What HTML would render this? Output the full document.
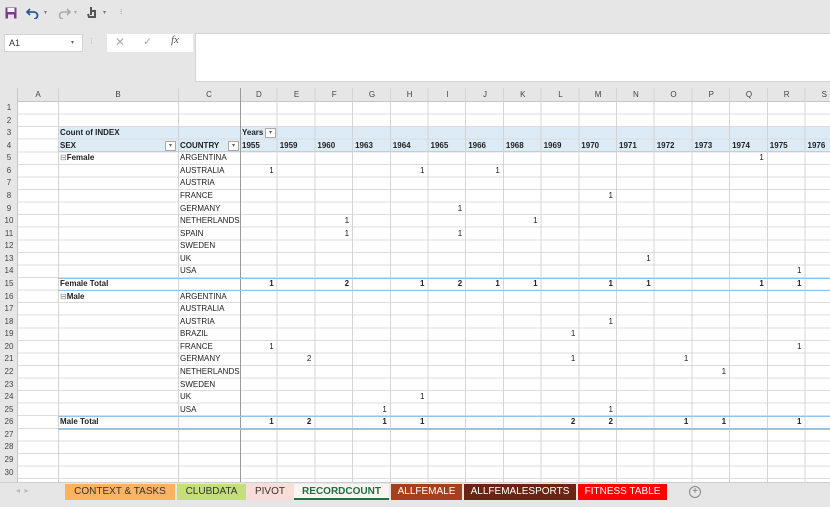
<!DOCTYPE html>
<html><head><meta charset="utf-8"><style>
*{margin:0;padding:0;box-sizing:border-box}
body{width:830px;height:507px;overflow:hidden;background:#e6e6e6;font-family:"Liberation Sans",Arial,sans-serif;position:relative}
.a{position:absolute}
#sheet{position:absolute;left:0;top:88px;width:830px;height:394px;background:#fff;overflow:hidden}
.t{position:absolute;font-size:8px;line-height:12.5px;height:12.5px;white-space:nowrap;color:#222;top:calc(14px + (var(--r) - 1)*12.57px)}
.n{width:37.7px;text-align:right;padding-right:4px}
.b{font-weight:bold}
.rh{position:absolute;left:0;width:18px;text-align:center;font-size:8px;color:#444;line-height:12.5px;top:calc(14px + (var(--r) - 1)*12.57px)}
.ch{position:absolute;top:0;height:14px;line-height:14px;font-size:8px;color:#444;text-align:center}
.tab{position:absolute;top:484px;height:16px;line-height:16px;font-size:10px;text-align:center;color:#333}
</style></head><body>
<!-- toolbar -->
<svg class="a" style="left:5px;top:7px" width="12" height="12"><rect x="0.5" y="0.5" width="11" height="11" fill="#7a3b8f"/><rect x="2.5" y="1" width="7" height="4" fill="#fff"/><rect x="3" y="7.5" width="6" height="4" fill="#e8dff0"/></svg>
<svg class="a" style="left:26px;top:7px" width="14" height="12"><path d="M4 2 L1 5 L4 8 M1.5 5 H8 a3.5 3.5 0 0 1 0 7" stroke="#2b579a" stroke-width="1.8" fill="none"/></svg>
<div class="a" style="left:44px;top:9px;font-size:6px;color:#777">▾</div>
<svg class="a" style="left:57px;top:7px" width="14" height="12"><path d="M10 2 L13 5 L10 8 M12.5 5 H6 a3.5 3.5 0 0 0 0 7" stroke="#aaa" stroke-width="1.6" fill="none"/></svg>
<div class="a" style="left:74px;top:9px;font-size:6px;color:#aaa">▾</div>
<svg class="a" style="left:86px;top:6px" width="12" height="14"><path d="M5 1 V9 M5 5 H9 V11 H3 L2 8" stroke="#555" stroke-width="2" fill="none"/></svg>
<div class="a" style="left:103px;top:9px;font-size:6px;color:#777">▾</div>
<div class="a" style="left:120px;top:8px;font-size:7px;color:#777">⁝</div>
<!-- name box / formula -->
<div class="a" style="left:4px;top:34px;width:79px;height:18px;background:#fff;border:1px solid #d4d4d4;font-size:9px;line-height:16px;padding-left:4px;color:#333">A1<span class="a" style="left:66px;top:0;font-size:6px;color:#666">▾</span></div>
<div class="a" style="left:90px;top:36px;font-size:9px;color:#bbb">⁝</div>
<div class="a" style="left:107px;top:34px;width:86px;height:18px;background:#fff"></div>
<div class="a" style="left:115px;top:35px;font-size:12px;color:#aaa">✕</div>
<div class="a" style="left:143px;top:35px;font-size:11px;color:#aaa">✓</div>
<div class="a" style="left:171px;top:34px;font-size:11px;font-style:italic;font-family:'Liberation Serif',serif;color:#555">fx</div>
<div class="a" style="left:195px;top:33px;width:640px;height:49px;background:#fff;border:1px solid #d4d4d4"></div>

<div id="sheet">
<!-- header bg -->
<div class="a" style="left:0;top:0;width:830px;height:14px;background:#e6e6e6;border-bottom:1px solid #c6c6c6"></div>
<div class="a" style="left:0;top:0;width:18px;height:394px;background:#e6e6e6;border-right:1px solid #c6c6c6"></div>
<!-- pivot header bg rows 3-4 -->
<div class="a" style="left:58px;top:39.1px;width:772px;height:25.1px;background:#ddebf7;border-bottom:1px solid #9bc2e6"></div>
<!-- horizontal grid -->
<div class="a" style="left:18px;top:14px;width:812px;height:380px;background:repeating-linear-gradient(to bottom,transparent 0,transparent 11.57px,#dcdcdc 11.57px,#dcdcdc 12.57px)"></div>
<!-- vertical grid -->
<div class="a" style="left:57.5px;top:0;width:1px;height:394px;background:#d4d4d4"></div>
<div class="a" style="left:177.5px;top:0;width:1px;height:394px;background:#d4d4d4"></div>
<div class="a" style="left:239.5px;top:0;width:1px;height:394px;background:#9a9a9a"></div>
<div class="a" style="left:240px;top:0;width:590px;height:394px;background:repeating-linear-gradient(to right,transparent 0,transparent 36.7px,#d4d4d4 36.7px,#d4d4d4 37.7px)"></div>
<!-- total lines -->
<div class="a" style="left:58px;top:189.9px;width:772px;height:1px;background:#9bc2e6"></div>
<div class="a" style="left:58px;top:201.9px;width:772px;height:1.5px;background:#9bc2e6"></div>
<div class="a" style="left:58px;top:328px;width:772px;height:1px;background:#9bc2e6"></div>
<div class="a" style="left:58px;top:340px;width:772px;height:1.5px;background:#9bc2e6"></div>

<!-- column headers -->
<div class="ch" style="left:18px;width:40px">A</div>
<div class="ch" style="left:58px;width:120px">B</div>
<div class="ch" style="left:178px;width:62px">C</div>
<div class="ch" style="left:240px;width:37.7px">D</div>
<div class="ch" style="left:277.7px;width:37.7px">E</div>
<div class="ch" style="left:315.4px;width:37.7px">F</div>
<div class="ch" style="left:353.1px;width:37.7px">G</div>
<div class="ch" style="left:390.8px;width:37.7px">H</div>
<div class="ch" style="left:428.5px;width:37.7px">I</div>
<div class="ch" style="left:466.2px;width:37.7px">J</div>
<div class="ch" style="left:503.9px;width:37.7px">K</div>
<div class="ch" style="left:541.6px;width:37.7px">L</div>
<div class="ch" style="left:579.3px;width:37.7px">M</div>
<div class="ch" style="left:617px;width:37.7px">N</div>
<div class="ch" style="left:654.7px;width:37.7px">O</div>
<div class="ch" style="left:692.4px;width:37.7px">P</div>
<div class="ch" style="left:730.1px;width:37.7px">Q</div>
<div class="ch" style="left:767.8px;width:37.7px">R</div>
<div class="ch" style="left:805.5px;width:37.7px">S</div>

<!-- row numbers -->
<div class="rh" style="--r:1">1</div><div class="rh" style="--r:2">2</div><div class="rh" style="--r:3">3</div><div class="rh" style="--r:4">4</div><div class="rh" style="--r:5">5</div><div class="rh" style="--r:6">6</div><div class="rh" style="--r:7">7</div><div class="rh" style="--r:8">8</div><div class="rh" style="--r:9">9</div><div class="rh" style="--r:10">10</div><div class="rh" style="--r:11">11</div><div class="rh" style="--r:12">12</div><div class="rh" style="--r:13">13</div><div class="rh" style="--r:14">14</div><div class="rh" style="--r:15">15</div><div class="rh" style="--r:16">16</div><div class="rh" style="--r:17">17</div><div class="rh" style="--r:18">18</div><div class="rh" style="--r:19">19</div><div class="rh" style="--r:20">20</div><div class="rh" style="--r:21">21</div><div class="rh" style="--r:22">22</div><div class="rh" style="--r:23">23</div><div class="rh" style="--r:24">24</div><div class="rh" style="--r:25">25</div><div class="rh" style="--r:26">26</div><div class="rh" style="--r:27">27</div><div class="rh" style="--r:28">28</div><div class="rh" style="--r:29">29</div><div class="rh" style="--r:30">30</div>

<!-- pivot header -->
<div class="t b" style="--r:3;left:60px">Count of INDEX</div>
<div class="t b" style="--r:3;left:242px">Years</div>
<div class="a" style="left:265px;top:40px;width:11px;height:10px;background:#fff;border:1px solid #aaa;font-size:6px;line-height:8px;text-align:center;color:#666">▾</div>
<div class="t b" style="--r:4;left:60px">SEX</div>
<div class="a" style="left:165px;top:52.5px;width:11px;height:10px;background:#fff;border:1px solid #aaa;font-size:6px;line-height:8px;text-align:center;color:#666">▾</div>
<div class="t b" style="--r:4;left:180px">COUNTRY</div>
<div class="a" style="left:228px;top:52.5px;width:11px;height:10px;background:#fff;border:1px solid #aaa;font-size:6px;line-height:8px;text-align:center;color:#666">▾</div>
<div class="t b" style="--r:4;left:242px">1955</div>
<div class="t b" style="--r:4;left:279.7px">1959</div>
<div class="t b" style="--r:4;left:317.4px">1960</div>
<div class="t b" style="--r:4;left:355.1px">1963</div>
<div class="t b" style="--r:4;left:392.8px">1964</div>
<div class="t b" style="--r:4;left:430.5px">1965</div>
<div class="t b" style="--r:4;left:468.2px">1966</div>
<div class="t b" style="--r:4;left:505.9px">1968</div>
<div class="t b" style="--r:4;left:543.6px">1969</div>
<div class="t b" style="--r:4;left:581.3px">1970</div>
<div class="t b" style="--r:4;left:619px">1971</div>
<div class="t b" style="--r:4;left:656.7px">1972</div>
<div class="t b" style="--r:4;left:694.4px">1973</div>
<div class="t b" style="--r:4;left:732.1px">1974</div>
<div class="t b" style="--r:4;left:769.8px">1975</div>
<div class="t b" style="--r:4;left:807.5px">1976</div>

<!-- female -->
<div class="t b" style="--r:5;left:60px"><span style="color:#888;font-weight:normal">⊟</span>Female</div>
<div class="t" style="--r:5;left:180px">ARGENTINA</div>
<div class="t" style="--r:6;left:180px">AUSTRALIA</div>
<div class="t" style="--r:7;left:180px">AUSTRIA</div>
<div class="t" style="--r:8;left:180px">FRANCE</div>
<div class="t" style="--r:9;left:180px">GERMANY</div>
<div class="t" style="--r:10;left:180px">NETHERLANDS</div>
<div class="t" style="--r:11;left:180px">SPAIN</div>
<div class="t" style="--r:12;left:180px">SWEDEN</div>
<div class="t" style="--r:13;left:180px">UK</div>
<div class="t" style="--r:14;left:180px">USA</div>
<div class="t n" style="--r:5;left:730.1px">1</div>
<div class="t n" style="--r:6;left:240px">1</div>
<div class="t n" style="--r:6;left:390.8px">1</div>
<div class="t n" style="--r:6;left:466.2px">1</div>
<div class="t n" style="--r:8;left:579.3px">1</div>
<div class="t n" style="--r:9;left:428.5px">1</div>
<div class="t n" style="--r:10;left:315.4px">1</div>
<div class="t n" style="--r:10;left:503.9px">1</div>
<div class="t n" style="--r:11;left:315.4px">1</div>
<div class="t n" style="--r:11;left:428.5px">1</div>
<div class="t n" style="--r:13;left:617px">1</div>
<div class="t n" style="--r:14;left:767.8px">1</div>
<div class="t b" style="--r:15;left:60px">Female Total</div>
<div class="t n b" style="--r:15;left:240px">1</div>
<div class="t n b" style="--r:15;left:315.4px">2</div>
<div class="t n b" style="--r:15;left:390.8px">1</div>
<div class="t n b" style="--r:15;left:428.5px">2</div>
<div class="t n b" style="--r:15;left:466.2px">1</div>
<div class="t n b" style="--r:15;left:503.9px">1</div>
<div class="t n b" style="--r:15;left:579.3px">1</div>
<div class="t n b" style="--r:15;left:617px">1</div>
<div class="t n b" style="--r:15;left:730.1px">1</div>
<div class="t n b" style="--r:15;left:767.8px">1</div>

<!-- male -->
<div class="t b" style="--r:16;left:60px"><span style="color:#888;font-weight:normal">⊟</span>Male</div>
<div class="t" style="--r:16;left:180px">ARGENTINA</div>
<div class="t" style="--r:17;left:180px">AUSTRALIA</div>
<div class="t" style="--r:18;left:180px">AUSTRIA</div>
<div class="t" style="--r:19;left:180px">BRAZIL</div>
<div class="t" style="--r:20;left:180px">FRANCE</div>
<div class="t" style="--r:21;left:180px">GERMANY</div>
<div class="t" style="--r:22;left:180px">NETHERLANDS</div>
<div class="t" style="--r:23;left:180px">SWEDEN</div>
<div class="t" style="--r:24;left:180px">UK</div>
<div class="t" style="--r:25;left:180px">USA</div>
<div class="t n" style="--r:18;left:579.3px">1</div>
<div class="t n" style="--r:19;left:541.6px">1</div>
<div class="t n" style="--r:20;left:240px">1</div>
<div class="t n" style="--r:20;left:767.8px">1</div>
<div class="t n" style="--r:21;left:277.7px">2</div>
<div class="t n" style="--r:21;left:541.6px">1</div>
<div class="t n" style="--r:21;left:654.7px">1</div>
<div class="t n" style="--r:22;left:692.4px">1</div>
<div class="t n" style="--r:24;left:390.8px">1</div>
<div class="t n" style="--r:25;left:353.1px">1</div>
<div class="t n" style="--r:25;left:579.3px">1</div>
<div class="t b" style="--r:26;left:60px">Male Total</div>
<div class="t n b" style="--r:26;left:240px">1</div>
<div class="t n b" style="--r:26;left:277.7px">2</div>
<div class="t n b" style="--r:26;left:353.1px">1</div>
<div class="t n b" style="--r:26;left:390.8px">1</div>
<div class="t n b" style="--r:26;left:541.6px">2</div>
<div class="t n b" style="--r:26;left:579.3px">2</div>
<div class="t n b" style="--r:26;left:654.7px">1</div>
<div class="t n b" style="--r:26;left:692.4px">1</div>
<div class="t n b" style="--r:26;left:767.8px">1</div>
</div>

<!-- tab bar -->
<div class="a" style="left:0;top:482px;width:830px;height:25px;background:#e6e6e6;border-top:1px solid #cfcfcf"></div>
<div class="a" style="left:16px;top:486px;font-size:8px;color:#bbb">◂ &nbsp;▸</div>
<div class="tab" style="left:65px;width:110px;background:#fdb35f">CONTEXT &amp; TASKS</div>
<div class="tab" style="left:177px;width:69px;background:#c4de7a">CLUBDATA</div>
<div class="tab" style="left:247px;width:46px;background:#f9ddd6">PIVOT</div>
<div class="tab" style="left:294px;width:95px;background:#fbf4f1;color:#1f6e43;font-weight:bold;border-bottom:2px solid #217346">RECORDCOUNT</div>
<div class="tab" style="left:391px;width:71px;background:#a53f1e;color:#fff">ALLFEMALE</div>
<div class="tab" style="left:464px;width:112px;background:#6a2413;color:#fff">ALLFEMALESPORTS</div>
<div class="tab" style="left:578px;width:89px;background:#fe0000;color:#fff">FITNESS TABLE</div>
<div class="a" style="left:689px;top:486px;width:12px;height:12px;border:1px solid #888;border-radius:50%;font-size:10px;line-height:10px;text-align:center;color:#777">+</div>
</body></html>
